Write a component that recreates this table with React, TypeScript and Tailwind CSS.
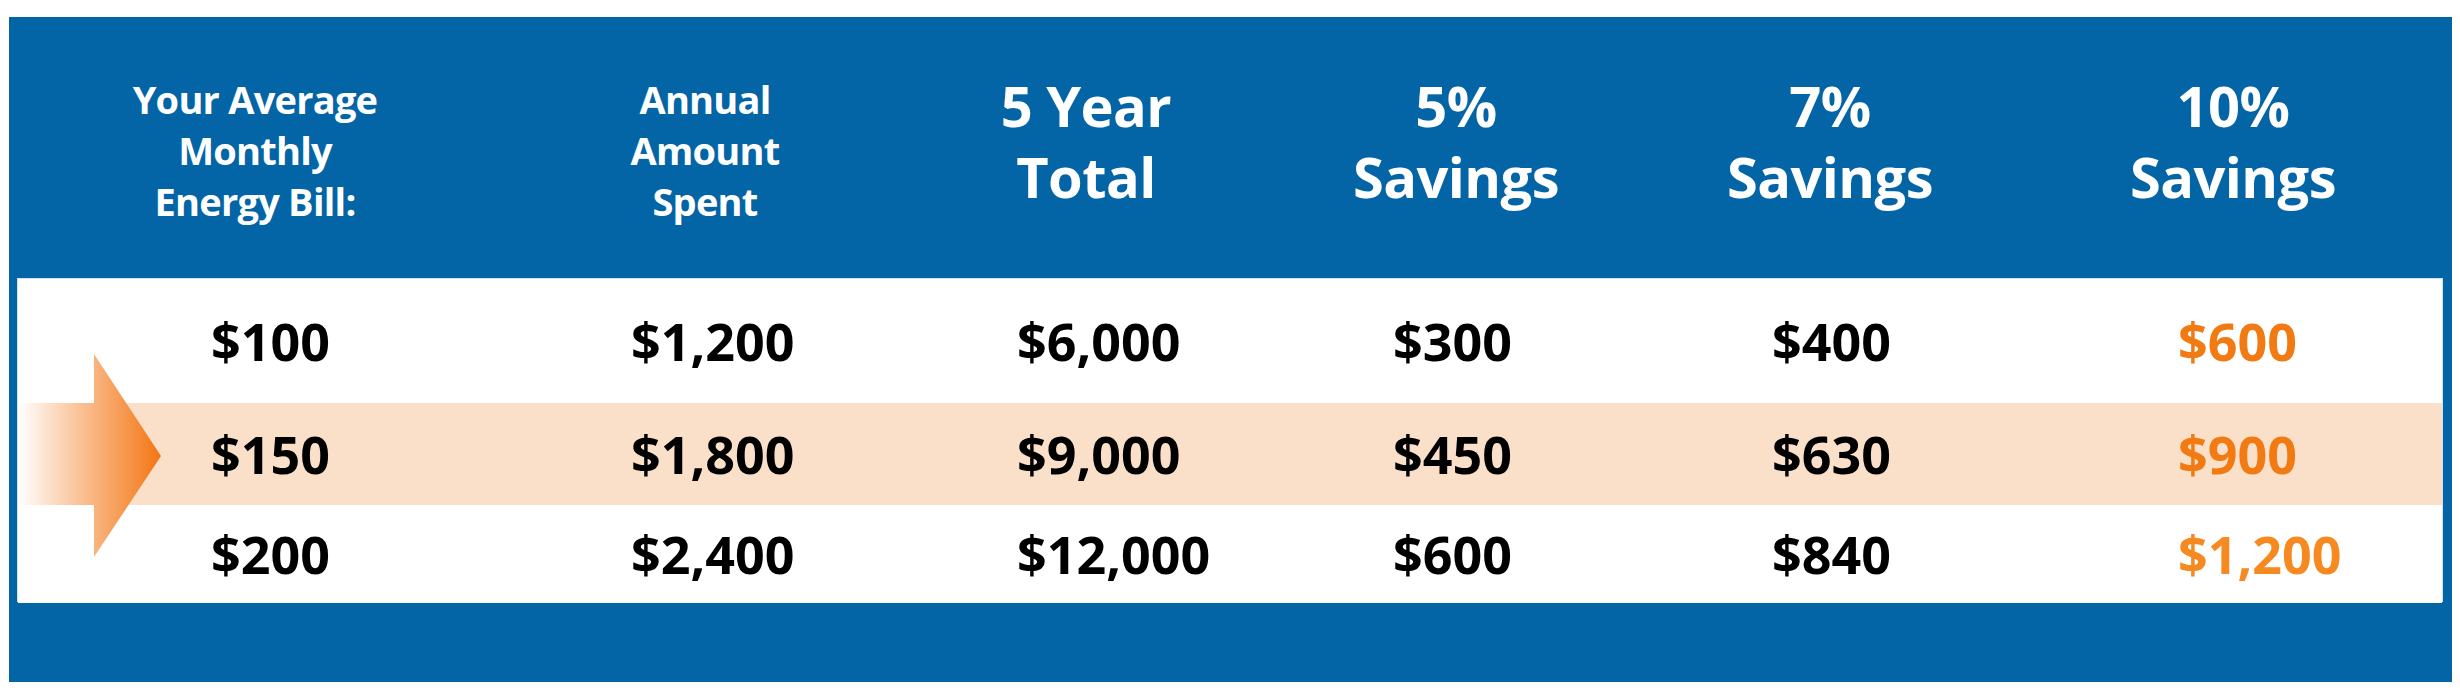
import React from 'react';

// column boxes, shared by the header and the rows (x measured from the white panel's left edge)
const cols = [
  { box: 'ml-[38px] w-[400px]', pad: 'pl-[155px]' },
  { box: 'ml-[100px] w-[300px]', pad: 'pl-[75px]' },
  { box: 'ml-[81px] w-[300px]', pad: 'pl-[80px]' },
  { box: 'ml-[70px] w-[300px]', pad: 'pl-[86px]' },
  { box: 'ml-[74px] w-[300px]', pad: 'pl-[91px]' },
  { box: 'ml-[103px] w-[300px]', pad: 'pl-[94px]' },
];

const headers: { lines: string[]; small?: boolean }[] = [
  { lines: ['Your Average', 'Monthly', 'Energy Bill:'], small: true },
  { lines: ['Annual', 'Amount', 'Spent'], small: true },
  { lines: ['5 Year', 'Total'] },
  { lines: ['5%', 'Savings'] },
  { lines: ['7%', 'Savings'] },
  { lines: ['10%', 'Savings'] },
];

const rows = [
  { h: 'h-[124px]', bg: 'bg-white', last: 'text-[#f17a12]', values: ['$100', '$1,200', '$6,000', '$300', '$400', '$600'] },
  { h: 'h-[102px]', bg: 'bg-[#fae0c9]', last: 'text-[#f17a12]', values: ['$150', '$1,800', '$9,000', '$450', '$630', '$900'] },
  { h: 'h-[98px]', bg: 'bg-white', last: 'text-[#f6891f]', values: ['$200', '$2,400', '$12,000', '$600', '$840', '$1,200'] },
];

const Arrow: React.FC = () => (
  <svg
    className="absolute left-0 top-[75px]"
    width="143"
    height="203"
    viewBox="0 0 143 203"
  >
    <defs>
      <linearGradient id="arrowFill" x1="0" y1="0" x2="143" y2="0" gradientUnits="userSpaceOnUse">
        <stop offset="0" stopColor="#ffffff" />
        <stop offset="0.5" stopColor="#f9b987" />
        <stop offset="1" stopColor="#f37513" />
      </linearGradient>
    </defs>
    <polygon points="0,49 76,49 76,0 143,102 76,203 76,151 0,151" fill="url(#arrowFill)" />
  </svg>
);

export default function App() {
  return (
    <div
      className="w-full h-[700px] bg-white pt-[17px] pl-[9px]"
      style={{ fontFamily: '"Open Sans", "Noto Sans", sans-serif' }}
    >
      <div className="w-[2443px] h-[665px] bg-[#0364a6] flex flex-col">
        {/* Header */}
        <div className="h-[261px] px-[8px] flex items-start text-white font-bold">
          {headers.map((hd, i) => (
            <div key={i} className={`${cols[i].box} shrink-0 text-center whitespace-nowrap`}>
              {hd.small ? (
                <div className="pt-[57px] text-[38px] leading-[51px] tracking-[-0.02em]">
                  {hd.lines.map((l) => (
                    <div key={l}>{l}</div>
                  ))}
                </div>
              ) : (
                <div className="pt-[53px] text-[56px] leading-[71px] tracking-[-0.01em]">
                  {hd.lines.map((l) => (
                    <div key={l}>{l}</div>
                  ))}
                </div>
              )}
            </div>
          ))}
        </div>

        {/* Table */}
        <div className="relative ml-[8px] w-[2426px] h-[324px] bg-white border border-[#cfe1ef] box-border">
          {rows.map((r, ri) => (
            <div key={ri} className={`${r.h} ${r.bg} flex items-center`}>
              {r.values.map((v, ci) => (
                <div
                  key={ci}
                  className={`${cols[ci].box} ${cols[ci].pad} shrink-0 whitespace-nowrap text-[52px] font-bold leading-none ${
                    ci === 5 ? r.last : 'text-black'
                  }`}
                >
                  {v}
                </div>
              ))}
            </div>
          ))}
          <Arrow />
        </div>
      </div>
    </div>
  );
}
